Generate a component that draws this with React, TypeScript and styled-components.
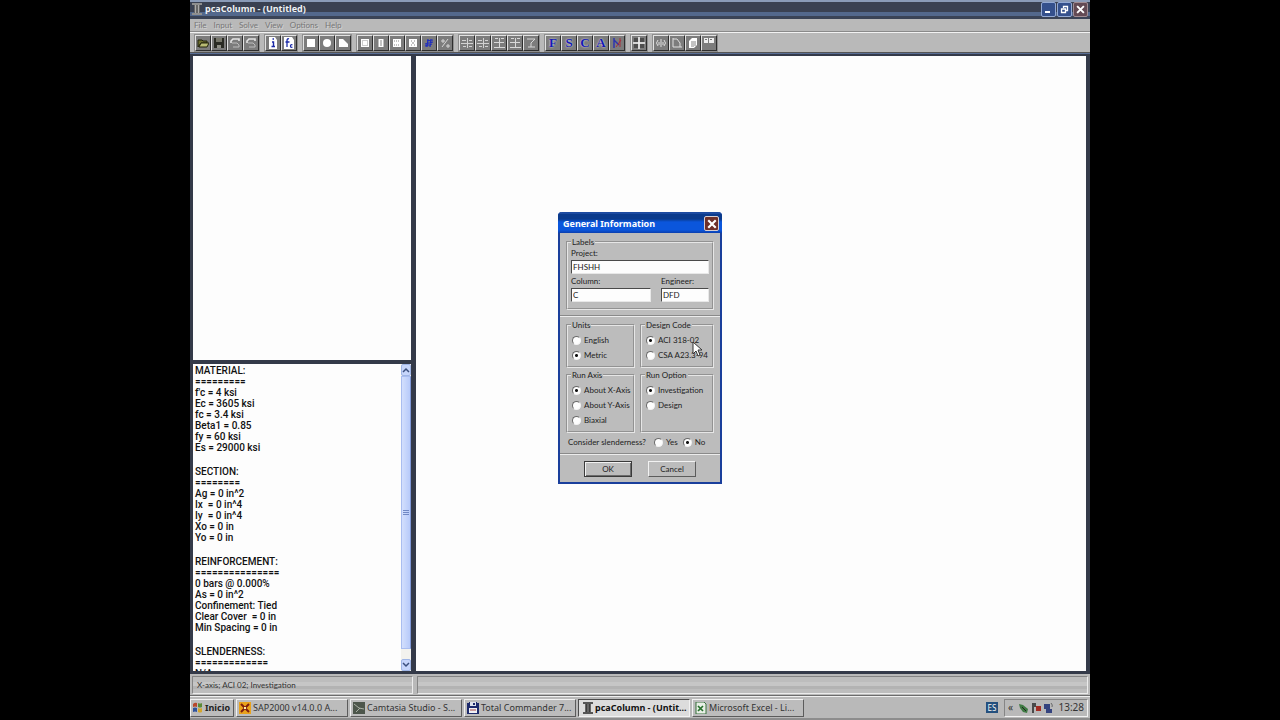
import React from "react";
import styled, { createGlobalStyle, css } from "styled-components";

const UI = `Lato, sans-serif`;
const CAPTION = `"Noto Sans", sans-serif`;

const Global = createGlobalStyle`
  *, *::before, *::after { box-sizing: border-box; }
  body { margin: 0; background: #000; }
  button, input { font: inherit; color: inherit; margin: 0; padding: 0; }
  ul, pre, p { margin: 0; padding: 0; }
`;

const Desktop = styled.div`
  height: 100vh;
  padding: 0 190px;
  display: flex;
  flex-direction: column;
  background: #000;
  color: #222;
  font: 8px/12px ${UI};
`;

const Screen = styled.div`
  position: relative;
  flex: 1;
  min-height: 0;
  display: flex;
  flex-direction: column;
  background: #b9b9b9;
`;

/* title bar */

const TitleBar = styled.header`
  flex: none;
  height: 19px;
  padding: 0 2px 1px 2px;
  display: flex;
  align-items: center;
  gap: 3px;
  background: linear-gradient(#8a9bb8 0 2px, #3a4152 2px 12px, #53688c 12px 16px, #3a4356 16px 19px);
`;

const TitleText = styled.h1`
  margin: 0;
  flex: 1;
  color: #eef1f5;
  font: bold 9px/16px ${CAPTION};
`;

const CaptionButtons = styled.div`
  display: flex;
  gap: 1px;
`;

const CaptionButton = styled.button<{ $close?: boolean }>`
  width: 15px;
  height: 15px;
  display: grid;
  place-items: center;
  border: 1px solid ${(p) => (p.$close ? "#a08c93" : "#93a9d3")};
  border-radius: 2px;
  background: ${(p) => (p.$close ? "#634a54" : "#34508c")};
`;

/* menu and tool bars */

const MenuBar = styled.nav`
  flex: none;
  height: 14px;
  padding-left: 4px;
  display: flex;
  gap: 7px;
  border-bottom: 1px solid #f2f2f2;
  box-shadow: inset 0 -1px #8a8a8a;
`;

const MenuItem = styled.button`
  border: 0;
  background: none;
  color: #777;
  text-shadow: 1px 1px #d2d2d2;
  line-height: 12px;
  height: 12px;
`;

const ToolBar = styled.div`
  flex: none;
  height: 20px;
  padding: 2px 0 0 5px;
  display: flex;
  gap: 6px;
  border-bottom: 1px solid #555;
`;

const ToolGroup = styled.div`
  display: flex;
  height: 16px;
  outline: 1px solid #8f8f8f;
`;

const ToolButton = styled.button`
  width: 16px;
  height: 16px;
  display: grid;
  place-items: center;
  border: 1px solid;
  border-color: #e2e2e2 #2e2e2e #2e2e2e #e2e2e2;
  background: #7c7c7c;
`;

const Letter = styled.span`
  color: #1418b4;
  font: bold 13px/12px "Liberation Serif", serif;
  text-shadow: 0 0 2px #fff;
`;

/* work area */

const WorkArea = styled.main`
  flex: 1;
  min-height: 0;
  padding: 3px 4px 3px 3px;
  display: grid;
  grid-template-columns: 218px 1fr;
  gap: 5px;
  background: linear-gradient(#5a6f96 0 1px, #343a49 1px);
`;

const SideColumn = styled.div`
  min-height: 0;
  display: flex;
  flex-direction: column;
  gap: 4px;
`;

const SectionView = styled.section`
  flex: 0 0 304px;
  background: #fdfdfd;
`;

const DiagramView = styled.section`
  background: #fdfdfd;
`;

const ReportPane = styled.section`
  flex: 1;
  min-height: 0;
  display: flex;
  background: #fdfdfd;
`;

const Report = styled.div`
  flex: 1;
  overflow: hidden;
  padding: 1px 2px;
  display: flex;
  flex-direction: column;
  gap: 13px;
`;

const ReportBlock = styled.pre`
  flex: none;
  color: #111;
  font: 500 10px/11px Roboto, sans-serif;
`;

const ScrollTrack = styled.div`
  width: 10px;
  display: flex;
  flex-direction: column;
  background: #f3f2ee;
`;

const ScrollButton = styled.button`
  flex: none;
  height: 12px;
  display: grid;
  place-items: center;
  border: 1px solid #9fb5e6;
  border-radius: 2px;
  background: #c6d5fb;
`;

const ScrollThumb = styled.div`
  flex: 1;
  margin-bottom: 10px;
  display: grid;
  place-items: center;
  border: 1px solid #a9bdf0;
  border-right-color: #7f97d6;
  background: linear-gradient(90deg, #d3dffd, #b7cafa);
`;

/* status bar */

const StatusBar = styled.footer`
  flex: none;
  height: 22px;
  padding: 2px 2px 2px 2px;
  display: grid;
  grid-template-columns: 221px 1fr;
  gap: 4px;
  background: #b9b9b9;
`;

const StatusCell = styled.div`
  padding-left: 4px;
  border: 1px solid;
  border-color: #858585 #ececec #ececec #858585;
  background: linear-gradient(#bdbdbd 0 5px, #c6c6c6 5px 9px, #b3b3b3 9px 12px, #bdbdbd 12px);
  color: #333;
  line-height: 16px;
`;

/* task bar */

const TaskBar = styled.footer`
  flex: none;
  height: 24px;
  padding: 0 2px 2px 0;
  display: flex;
  align-items: center;
  gap: 2px;
  border-top: 1px solid #f0f0f0;
  box-shadow: inset 0 -2px #8d8d8d, 0 -1px #6c6c6c;
  background: #b9b9b9;
  font: 9px/15px ${CAPTION};
`;

const raised = css`
  border: 1px solid;
  border-color: #f2f2f2 #5c5c5c #5c5c5c #f2f2f2;
`;

const StartButton = styled.button`
  ${raised}
  width: 44px;
  height: 18px;
  padding-left: 1px;
  display: flex;
  align-items: center;
  gap: 2px;
  background: #bcbcbc;
  font-weight: bold;
`;

const TaskButton = styled.button<{ $active?: boolean }>`
  ${raised}
  flex: 0 1 112px;
  min-width: 0;
  height: 18px;
  padding: 0 2px;
  display: flex;
  align-items: center;
  gap: 2px;
  background: #bcbcbc;
  white-space: nowrap;
  color: #333;
  ${(p) =>
    p.$active &&
    css`
      background: #dcdcdc;
      border-color: #4c4c4c #f2f2f2 #f2f2f2 #4c4c4c;
      padding-left: 4px;
      font-weight: bold;
      color: #111;
    `}
  svg { flex: none; }
`;

const Language = styled.span`
  margin-left: auto;
  margin-right: 4px;
  width: 12px;
  height: 11px;
  background: #24507e;
  color: #f4f4f4;
  font: 8px/11px ${CAPTION};
  text-align: center;
`;

const Tray = styled.div`
  width: 84px;
  height: 18px;
  padding: 0 3px;
  display: flex;
  align-items: center;
  justify-content: space-between;
  border: 1px solid;
  border-color: #858585 #f2f2f2 #f2f2f2 #858585;
  font-size: 10px;
  color: #333;
`;

/* dialog */

const Dialog = styled.form`
  position: absolute;
  top: 212px;
  left: 50%;
  width: 164px;
  margin-left: -82px;
  border: 2px solid #1a3f9c;
  border-top-width: 0;
  border-radius: 4px 4px 0 0;
  background: #bcbcbc;
  color: #222;
`;

const DialogTitle = styled.header`
  height: 21px;
  margin: 0 -2px;
  padding: 2px 3px 0 5px;
  display: flex;
  align-items: center;
  border-radius: 4px 4px 0 0;
  background: linear-gradient(#1c4aa0 0 2px, #0a3a8c 2px 7px, #0b56dc 10px 18px, #0b3fae);
`;

const DialogName = styled.h2`
  margin: 0;
  flex: 1;
  color: #fff;
  font: bold 9px/16px ${CAPTION};
`;

const DialogClose = styled.button`
  width: 15px;
  height: 15px;
  display: grid;
  place-items: center;
  border: 1px solid #d8cfd2;
  border-radius: 2px;
  background: #6e3029;
`;

const Band = styled.div`
  padding: 3px 6px 5px 6px;
  display: flex;
  flex-direction: column;
  gap: 1px;
  border-bottom: 1px solid #8a8a8a;
  box-shadow: 0 1px #ececec;
`;

const GroupRow = styled.div`
  display: grid;
  grid-template-columns: 69px 1fr;
  gap: 5px;
`;

const Group = styled.fieldset<{ $height: number }>`
  margin: 0;
  min-width: 0;
  height: ${(p) => p.$height}px;
  padding: 0 3px;
  border: 2px groove #e6e6e6;
`;

const Legend = styled.legend`
  margin-left: 0;
  padding: 0 1px;
  line-height: 12px;
`;

const Fields = styled.div`
  display: grid;
  grid-template-columns: 80px 48px;
  justify-content: space-between;
  row-gap: 2px;
`;

const Field = styled.label<{ $wide?: boolean }>`
  display: flex;
  flex-direction: column;
  line-height: 11px;
  ${(p) => p.$wide && "grid-column: 1 / -1;"}
`;

const TextBox = styled.input`
  width: 100%;
  height: 14px;
  margin-top: 1px;
  padding-left: 1px;
  border: 1px solid;
  border-color: #4a4a4a #e8e8e8 #e8e8e8 #4a4a4a;
  background: #fdfdfd;
`;

const Choices = styled.div`
  padding: 4px 0 0 1px;
  display: flex;
  flex-direction: column;
  gap: 4px;
`;

const Choice = styled.label`
  display: flex;
  align-items: center;
  gap: 3px;
  line-height: 11px;
  white-space: nowrap;
`;

const Radio = styled.input`
  appearance: none;
  flex: none;
  width: 9px;
  height: 9px;
  border: 1px solid;
  border-color: #6a6a6a #f2f2f2 #f2f2f2 #6a6a6a;
  border-radius: 50%;
  background: #fdfdfd;
  &:checked {
    background: radial-gradient(circle, #111 0 1px, #fdfdfd 2px);
  }
`;

const Question = styled.div`
  margin: 2px 0 0 2px;
  display: flex;
  align-items: center;
  gap: 5px;
  line-height: 12px;
  white-space: nowrap;
`;

const QuestionText = styled.span`
  margin-right: 3px;
`;

const Actions = styled.div`
  padding: 7px 0 5px;
  display: flex;
  justify-content: center;
  gap: 16px;
`;

const ActionButton = styled.button<{ $default?: boolean }>`
  ${raised}
  width: 48px;
  height: 16px;
  background: #bcbcbc;
  line-height: 12px;
  ${(p) => p.$default && "border-color: #3a3a3a; box-shadow: inset 1px 1px #f2f2f2, inset -1px -1px #6c6c6c;"}
`;

const Pointer = styled.svg`
  position: absolute;
  top: 129px;
  left: 132px;
`;

/* drawings */

const ColumnIcon = ({ light }: { light?: boolean }) => (
  <svg width="10" height="12" viewBox="0 0 10 12" aria-hidden="true">
    <path d="M0 0h10v2H0zM0 10h10v2H0z" fill={light ? "#8f8f8f" : "#555"} />
    <path d="M2 2h6v8H2z" fill="#666" />
    <path d="M3.500 2v8M6.500 2v8" stroke={light ? "#aaa" : "#3c3c3c"} />
  </svg>
);

const Cross = ({ size }: { size: number }) => (
  <svg width={size} height={size} viewBox="0 0 8 8" aria-hidden="true">
    <path d="M1 1l6 6M7 1l-6 6" stroke="#fff" strokeWidth="1.7" />
  </svg>
);

const bars = (
  <path d="M6.500 1v10M1 3.500h4M8 3.500h3M0 6.500h12M2 9.500h3M8 9.500h3" stroke="#d2d2d2" fill="none" />
);
const axes = <path d="M6.500 1v9M1 5.500h10M1 10.500h11M2 1.500h3M8 1.500h3" stroke="#d8d8d8" fill="none" />;
const undo = (
  <>
    <path d="M2 6V4l2-2h6v2" stroke="#e4e4e4" fill="none" strokeWidth="1.6" />
    <path d="M3 6h5l2 2v2H4" stroke="#bcbcbc" fill="none" />
  </>
);

const drawings: Record<string, React.ReactNode> = {
  Open: (
    <>
      <path d="M1 10V3h4l1 1h4v2H4z" fill="#6f7030" stroke="#23240c" />
      <path d="M2 10l2-4h8l-2 4z" fill="#b9bc74" stroke="#23240c" />
    </>
  ),
  Save: (
    <>
      <path d="M1 1h10v10H1z" fill="#2a2b24" />
      <path d="M3 1h6v4H3z" fill="#77776b" />
      <path d="M4 8h4v3H4z" fill="#8f8f86" />
    </>
  ),
  Undo: undo,
  Redo: undo,
  Information: (
    <>
      <path d="M2 0h6l2 3v9H2z" fill="#fff" />
      <path d="M5.500 2h1.500M5 5h1.500v4M4.500 9.500h3.500" stroke="#1b2aa8" strokeWidth="1.4" fill="none" />
    </>
  ),
  Materials: (
    <>
      <path d="M1 0h8l2 3v9H1z" fill="#fff" />
      <path d="M6 2q-2-1-2 2v6M2.500 5h4M9.500 8q-2-1-2 1t2 1" stroke="#1b2aa8" strokeWidth="1.3" fill="none" />
    </>
  ),
  Rectangle: <path d="M2 2h8v8H2z" fill="#fff" />,
  Circle: <circle cx="6" cy="6" r="4" fill="#fff" />,
  Irregular: <path d="M2 2h4l5 5v3H2z" fill="#fff" />,
  "All sides equal": (
    <>
      <path d="M2 2h8v8H2z" fill="#fff" />
      <path d="M3.500 3.500h5v5h-5z" stroke="#999" fill="none" strokeDasharray="1 1" />
    </>
  ),
  "Equal spacing": (
    <>
      <path d="M3.500 2h5v8h-5z" fill="#fff" />
      <path d="M5 4h2M5 6h2M5 8h2" stroke="#888" />
    </>
  ),
  "Sides different": (
    <>
      <path d="M2 2h8v8H2z" fill="#fff" />
      <path d="M3 4h6M3 8h6" stroke="#888" strokeDasharray="1 1" />
    </>
  ),
  "Irregular pattern": (
    <>
      <path d="M2 2h8v8H2z" fill="#fff" />
      <path d="M4 4h1M7 4h1M5 6h2M4 8h1M7 8h1" stroke="#888" />
    </>
  ),
  Reinforcement: (
    <path d="M5 2L4 10M8 2L7 10M2 7l8-2M2 9l7-2M4 4l6-1" stroke="#1e2cc0" strokeWidth="1.2" />
  ),
  Ratio: (
    <path d="M3 10l6-8M3 3h2v2H3zM8 8h2v2H8z" stroke="#d6d6d6" fill="none" />
  ),
  "Factored loads": bars,
  "Service loads": bars,
  "Control points": axes,
  "Axial loads": axes,
  "Sum loads": <path d="M2 2h8L6 6v4M3 10h7" stroke="#d6d6d6" fill="none" />,
  "Diagram": (
    <>
      <path d="M3 1v10M3 3l5 5" stroke="#2a32b0" strokeWidth="1.400" fill="none" />
      <path d="M9 1v9M5 10l5-7" stroke="#a8303c" fill="none" />
    </>
  ),
  Tile: (
    <>
      <path d="M1 1h4v4H1zM7 1h4v4H7zM1 7h4v4H1zM7 7h4v4H7z" fill="#4d4d4d" />
      <path d="M6 0v12M0 6h12" stroke="#f2f2f2" strokeWidth="1.600" />
    </>
  ),
  "Moment plot": (
    <path d="M3 3Q0 6 3 9M9 3q3 3 0 6M6 2v8M4 5v3M8 5v3" stroke="#dedede" fill="none" />
  ),
  "Axial plot": <path d="M2 1v9h9M2 2h4l3 4v4" stroke="#dedede" fill="none" />,
  "3D view": (
    <>
      <path d="M2 4l3-3h5v7l-3 3H2z" fill="#fff" />
      <path d="M4 5h3M4 7h3M4 9h3M8 4v5" stroke="#888" />
    </>
  ),
  "Results": (
    <>
      <path d="M1 1h4v5H1zM6 1h5v5H6z" fill="#eee" />
      <path d="M2 2.500h2M7 2.500h2" stroke="#777" />
    </>
  ),
};

const toolGroups = [
  ["Open", "Save", "Undo", "Redo"],
  ["Information", "Materials"],
  ["Rectangle", "Circle", "Irregular"],
  ["All sides equal", "Equal spacing", "Sides different", "Irregular pattern", "Reinforcement", "Ratio"],
  ["Factored loads", "Service loads", "Control points", "Axial loads", "Sum loads"],
  ["F", "S", "C", "A", "Diagram"],
  ["Tile"],
  ["Moment plot", "Axial plot", "3D view", "Results"],
];

const Tool = ({ name }: { name: string }) => (
  <ToolButton type="button" aria-label={name}>
    {name.length === 1 ? (
      <Letter>{name}</Letter>
    ) : (
      <svg width="12" height="12" viewBox="0 0 12 12" aria-hidden="true">
        {drawings[name]}
      </svg>
    )}
  </ToolButton>
);

const report = [
  "MATERIAL:\n=========\nf'c = 4 ksi\nEc = 3605 ksi\nfc = 3.4 ksi\nBeta1 = 0.85\nfy = 60 ksi\nEs = 29000 ksi",
  "SECTION:\n========\nAg = 0 in^2\nIx  = 0 in^4\nIy  = 0 in^4\nXo = 0 in\nYo = 0 in",
  "REINFORCEMENT:\n===============\n0 bars @ 0.000%\nAs = 0 in^2\nConfinement: Tied\nClear Cover  = 0 in\nMin Spacing = 0 in",
  "SLENDERNESS:\n=============\nN/A",
];

const tasks = [
  {
    label: "SAP2000 v14.0.0 A...",
    icon: (
      <svg width="12" height="12" viewBox="0 0 12 12" aria-hidden="true">
        <path d="M0 0h12v12H0z" fill="#e9a21c" />
        <path d="M2 2l8 8M10 2l-8 8" stroke="#7c1c10" strokeWidth="2" />
        <path d="M5 5h2v2H5z" fill="#fff2b0" />
      </svg>
    ),
  },
  {
    label: "Camtasia Studio - S...",
    icon: (
      <svg width="12" height="12" viewBox="0 0 12 12" aria-hidden="true">
        <path d="M0 0h12v12H0z" fill="#4d564b" />
        <path d="M1 2l5 4 5 1M3 10l4-4" stroke="#a9b0a4" fill="none" />
      </svg>
    ),
  },
  {
    label: "Total Commander 7...",
    icon: (
      <svg width="12" height="12" viewBox="0 0 12 12" aria-hidden="true">
        <path d="M0 1h2V0h8v1h2v11H0z" fill="#1d2a6c" />
        <path d="M3 0h6v4H3z" fill="#dfe3ee" />
        <path d="M6 1h2v2H6z" fill="#1d2a6c" />
        <path d="M2 6h8v5H2z" fill="#f0f0f4" />
        <path d="M3 8h6" stroke="#a34444" />
      </svg>
    ),
  },
  { label: "pcaColumn - (Untit...", icon: <ColumnIcon />, active: true },
  {
    label: "Microsoft Excel - Li...",
    icon: (
      <svg width="12" height="12" viewBox="0 0 12 12" aria-hidden="true">
        <path d="M1 0h8l2 2v10H1z" fill="#e8efe6" stroke="#39713c" />
        <path d="M3 4l5 5M8 4L3 9" stroke="#27702c" strokeWidth="1.700" />
      </svg>
    ),
  },
];

const Option = ({ name, label, checked }: { name: string; label: string; checked?: boolean }) => (
  <Choice>
    <Radio type="radio" name={name} defaultChecked={checked} />
    {label}
  </Choice>
);

export default function App() {
  return (
    <Desktop>
      <Global />
      <Screen>
        <TitleBar>
          <ColumnIcon light />
          <TitleText>pcaColumn - (Untitled)</TitleText>
          <CaptionButtons>
            <CaptionButton type="button" aria-label="Minimize">
              <svg width="9" height="9" viewBox="0 0 9 9"><path d="M1 7h5" stroke="#fff" strokeWidth="2" /></svg>
            </CaptionButton>
            <CaptionButton type="button" aria-label="Restore">
              <svg width="9" height="9" viewBox="0 0 9 9">
                <path d="M3.500 3V1.500h4v4H6M1.500 4h4v3.500h-4z" stroke="#fff" strokeWidth="1.300" fill="none" />
              </svg>
            </CaptionButton>
            <CaptionButton type="button" aria-label="Close" $close>
              <Cross size={9} />
            </CaptionButton>
          </CaptionButtons>
        </TitleBar>

        <MenuBar>
          {["File", "Input", "Solve", "View", "Options", "Help"].map((m) => (
            <MenuItem key={m} type="button">{m}</MenuItem>
          ))}
        </MenuBar>

        <ToolBar>
          {toolGroups.map((group, i) => (
            <ToolGroup key={i}>
              {group.map((name) => <Tool key={name} name={name} />)}
            </ToolGroup>
          ))}
        </ToolBar>

        <WorkArea>
          <SideColumn>
            <SectionView />
            <ReportPane>
              <Report>
                {report.map((text) => <ReportBlock key={text}>{text}</ReportBlock>)}
              </Report>
              <ScrollTrack>
                <ScrollButton type="button" aria-label="Scroll up">
                  <svg width="8" height="6" viewBox="0 0 8 6"><path d="M1 5l3-3 3 3" stroke="#3b4f7e" strokeWidth="1.500" fill="none" /></svg>
                </ScrollButton>
                <ScrollThumb>
                  <svg width="6" height="6" viewBox="0 0 6 6"><path d="M0 .5h6M0 2.500h6M0 4.500h6" stroke="#7088c4" /></svg>
                </ScrollThumb>
                <ScrollButton type="button" aria-label="Scroll down">
                  <svg width="8" height="6" viewBox="0 0 8 6"><path d="M1 1l3 3 3-3" stroke="#3b4f7e" strokeWidth="1.500" fill="none" /></svg>
                </ScrollButton>
              </ScrollTrack>
            </ReportPane>
          </SideColumn>
          <DiagramView />
        </WorkArea>

        <StatusBar>
          <StatusCell>X-axis; ACI 02; Investigation</StatusCell>
          <StatusCell />
        </StatusBar>

        <TaskBar>
          <StartButton type="button">
            <svg width="11" height="11" viewBox="0 0 11 11" aria-hidden="true">
              <path d="M1 2q2-2 4-1v4q-2-1-4 0z" fill="#b8482c" />
              <path d="M6 1q2 1 4 0v4q-2 1-4 0z" fill="#5b8a35" />
              <path d="M1 6q2-1 4 0v4q-2-1-4 0z" fill="#2f539c" />
              <path d="M6 6q2 1 4 0v4q-2 1-4 0z" fill="#d4a52a" />
            </svg>
            Inicio
          </StartButton>
          {tasks.map((t) => (
            <TaskButton key={t.label} type="button" $active={t.active}>
              {t.icon}
              {t.label}
            </TaskButton>
          ))}
          <Language>ES</Language>
          <Tray>
            <span>«</span>
            <svg width="38" height="12" viewBox="0 0 36 12" aria-hidden="true">
              <path d="M1 2l4 1 5 4-1 4-4-1-3-4z" fill="#3f7a43" />
              <path d="M4 5l4 4" stroke="#222" />
              <path d="M14 1h4v4h-2v6h-2z" fill="#4a4a4a" />
              <path d="M18 4h5v5h-5z" fill="#a32b22" />
              <path d="M26 2h6v5h-6zM28 7h6v4h-6z" fill="#34437f" />
              <path d="M33 1q2 2 1 4" stroke="#666" fill="none" />
            </svg>
            <time>13:28</time>
          </Tray>
        </TaskBar>

        <Dialog>
          <DialogTitle>
            <DialogName>General Information</DialogName>
            <DialogClose type="button" aria-label="Close dialog">
              <Cross size={10} />
            </DialogClose>
          </DialogTitle>

          <Band>
            <Group $height={74}>
              <Legend>Labels</Legend>
              <Fields>
                <Field $wide>
                  Project:
                  <TextBox type="text" defaultValue="FHSHH" />
                </Field>
                <Field>
                  Column:
                  <TextBox type="text" defaultValue="C" />
                </Field>
                <Field>
                  Engineer:
                  <TextBox type="text" defaultValue="DFD" />
                </Field>
              </Fields>
            </Group>
          </Band>

          <Band>
            <GroupRow>
              <Group $height={49}>
                <Legend>Units</Legend>
                <Choices>
                  <Option name="units" label="English" />
                  <Option name="units" label="Metric" checked />
                </Choices>
              </Group>
              <Group $height={49}>
                <Legend>Design Code</Legend>
                <Choices>
                  <Option name="code" label="ACI 318-02" checked />
                  <Option name="code" label="CSA A23.3-94" />
                </Choices>
              </Group>
            </GroupRow>
            <GroupRow>
              <Group $height={64}>
                <Legend>Run Axis</Legend>
                <Choices>
                  <Option name="axis" label="About X-Axis" checked />
                  <Option name="axis" label="About Y-Axis" />
                  <Option name="axis" label="Biaxial" />
                </Choices>
              </Group>
              <Group $height={64}>
                <Legend>Run Option</Legend>
                <Choices>
                  <Option name="run" label="Investigation" checked />
                  <Option name="run" label="Design" />
                </Choices>
              </Group>
            </GroupRow>
            <Question role="radiogroup" aria-label="Consider slenderness?">
              <QuestionText>Consider slenderness?</QuestionText>
              <Option name="slender" label="Yes" />
              <Option name="slender" label="No" checked />
            </Question>
          </Band>

          <Actions>
            <ActionButton type="button" $default>OK</ActionButton>
            <ActionButton type="button">Cancel</ActionButton>
          </Actions>

          <Pointer width="11" height="17" viewBox="0 0 11 17" aria-hidden="true">
            <path d="M1 1v12l3-3 2 5 2-1-2-5h4z" fill="#fff" stroke="#333" />
          </Pointer>
        </Dialog>
      </Screen>
    </Desktop>
  );
}
